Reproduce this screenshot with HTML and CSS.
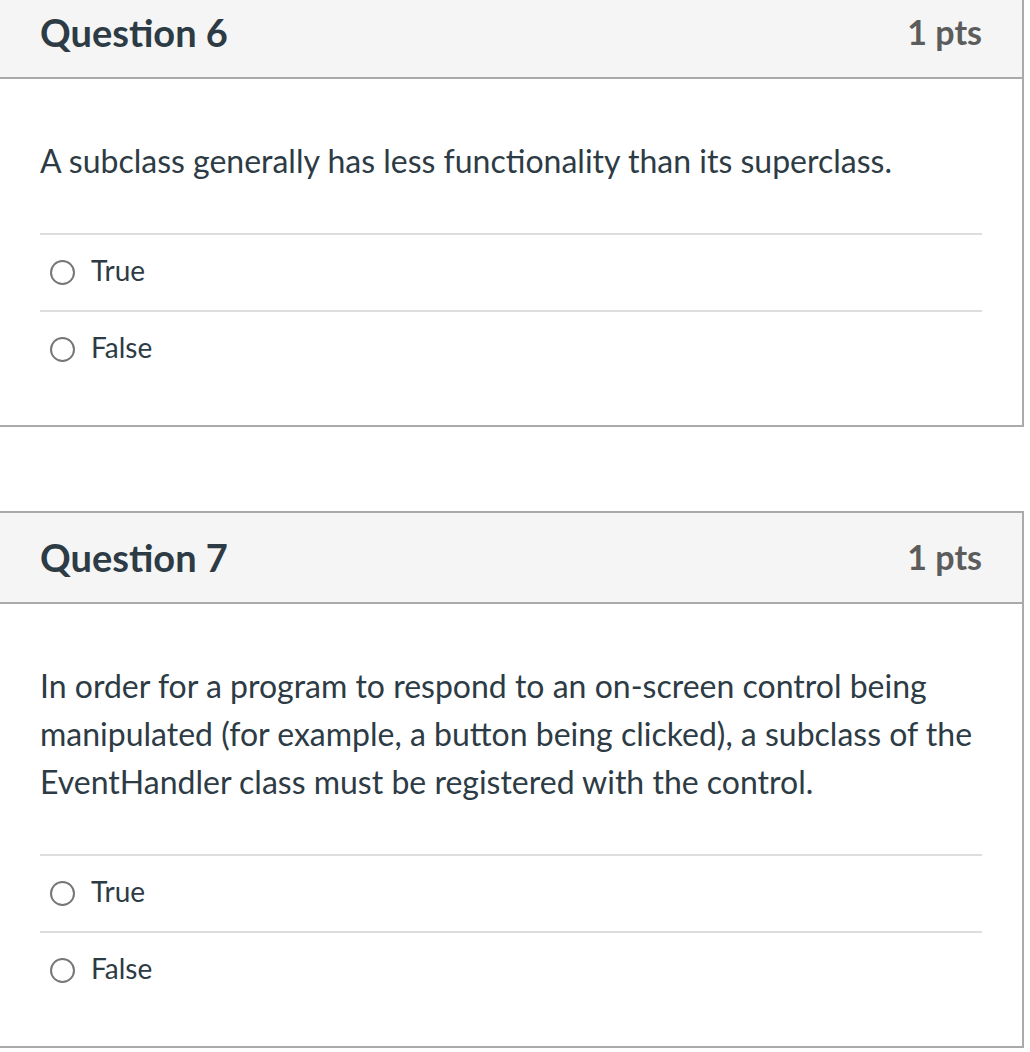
FILE: index.html
```html
<!DOCTYPE html>
<html lang="en">
<head>
<meta charset="utf-8">
<title>Quiz</title>
<link rel="stylesheet" href="styles.css">
</head>
<body>
<div class="quiz">
  <section class="question first">
    <header class="q-header">
      <h2 class="q-title">Question 6</h2>
      <span class="q-points">1 pts</span>
    </header>
    <div class="q-body">
      <p class="q-text">A subclass generally has less functionality than its superclass.</p>
      <ul class="answers">
        <li class="answer"><span class="radio"></span><span class="label">True</span></li>
        <li class="answer"><span class="radio"></span><span class="label">False</span></li>
      </ul>
    </div>
  </section>
  <section class="question">
    <header class="q-header">
      <h2 class="q-title">Question 7</h2>
      <span class="q-points">1 pts</span>
    </header>
    <div class="q-body">
      <p class="q-text">In order for a program to respond to an on-screen control being manipulated (for example, a button being clicked), a subclass of the EventHandler class must be registered with the control.</p>
      <ul class="answers">
        <li class="answer"><span class="radio"></span><span class="label">True</span></li>
        <li class="answer"><span class="radio"></span><span class="label">False</span></li>
      </ul>
    </div>
  </section>
</div>
</body>
</html>
```
FILE: styles.css
```css
html, body {
  margin: 0;
  padding: 0;
  background: #ffffff;
}
body {
  font-family: Lato, "Open Sans", sans-serif;
  color: #2d3b45;
}
.quiz {
  margin-left: -2px;
  width: 1026px;
  display: flex;
  flex-direction: column;
  gap: 84px;
}
.question {
  border: 2px solid #aaaaaa;
  box-sizing: border-box;
}
.question.first {
  margin-top: -14px;
}
.q-header {
  height: 89px;
  background: #f5f5f5;
  border-bottom: 2px solid #aaaaaa;
  display: flex;
  align-items: center;
  justify-content: space-between;
  padding: 0 40px 0 40px;
}
.q-title {
  margin: 0 0 2px 0;
  font-size: 38px;
  font-weight: 700;
  color: #2d3b45;
}
.q-points {
  font-size: 34px;
  font-weight: 700;
  color: #5c5c5c;
  margin-bottom: 2px;
}
.q-body {
  padding: 58px 40px 38px 40px;
}
.q-text {
  margin: 0 0 48px 0;
  font-size: 32px;
  line-height: 48px;
}
.answers {
  list-style: none;
  margin: 0;
  padding: 0;
}
.answer {
  border-top: 2px solid #dddddd;
  height: 75px;
  display: flex;
  align-items: center;
  padding-left: 10px;
}
.radio {
  width: 21px;
  height: 21px;
  border: 2px solid #777777;
  border-radius: 50%;
  margin-right: 16px;
  flex: none;
}
.label {
  font-size: 28px;
  margin-bottom: 5px;
}
```
